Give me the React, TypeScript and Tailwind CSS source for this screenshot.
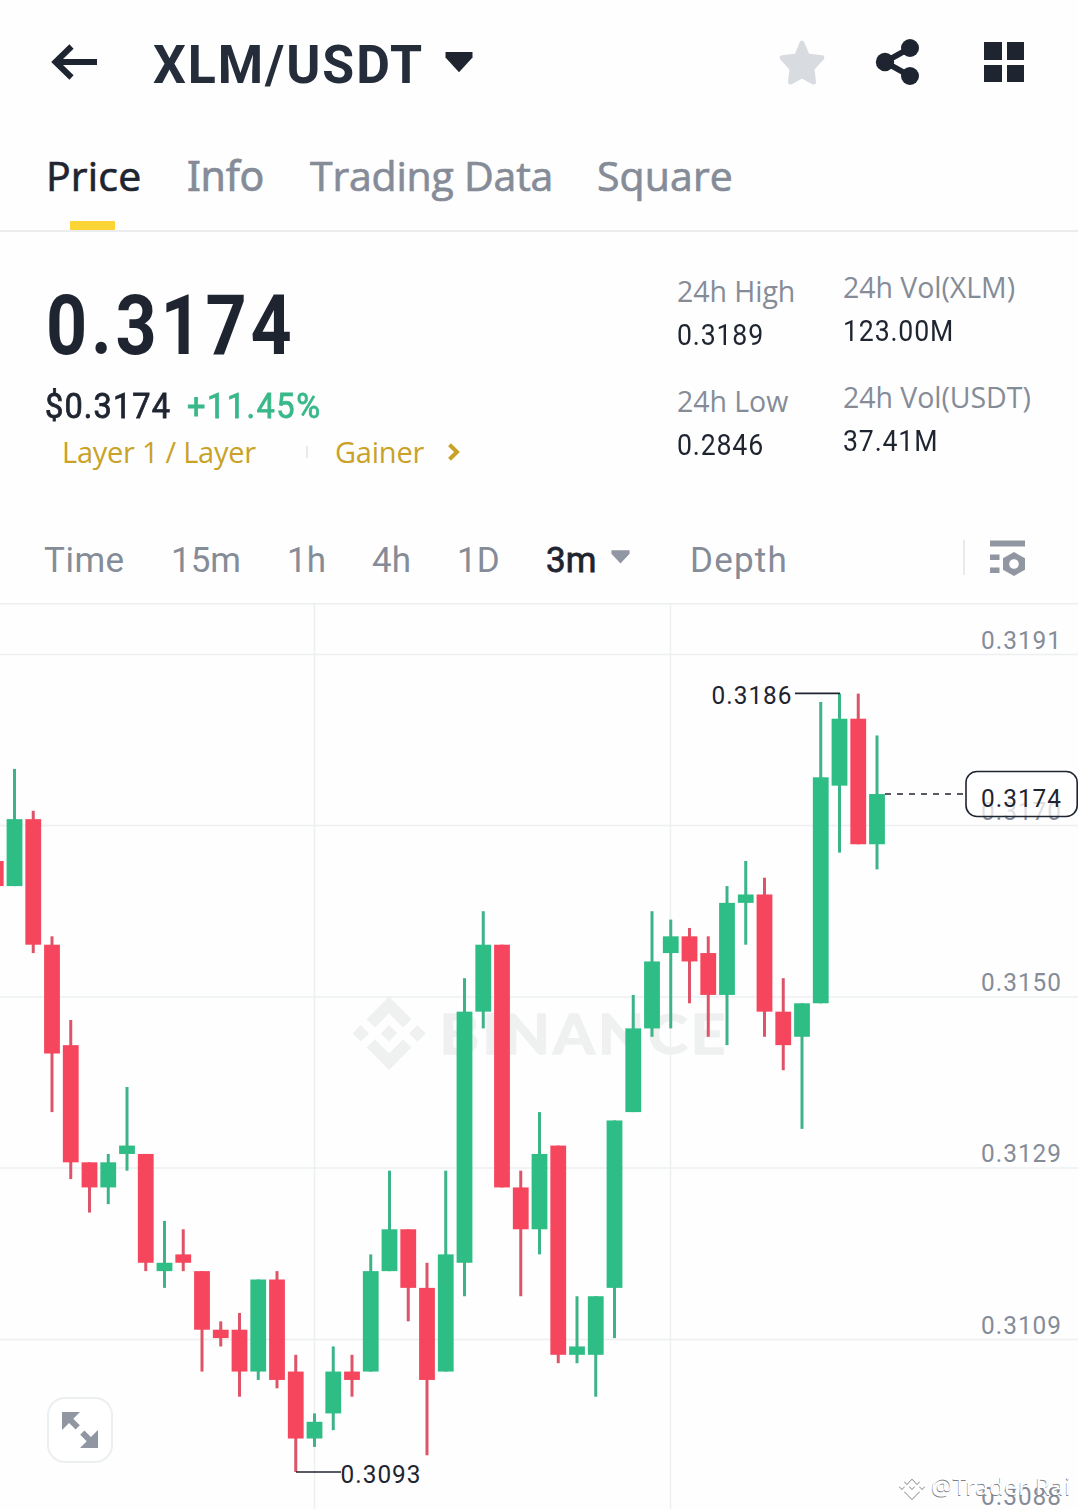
const GREEN = '#2ebd85';
const RED = '#f6465d';
const TOP_Y = 693.6;
const TICK = 8.37;
const FIRST_X = -4.25;
const PITCH = 18.75;

// [open, high, low, close] in units of 0.0001 below the visible high
const candles: [number, number, number, number][] = [
  [20, 20, 23, 23],
  [23, 9, 23, 15],
  [15, 14, 31, 30],
  [30, 29, 50, 43],
  [42, 39, 58, 56],
  [56, 56, 62, 59],
  [59, 55, 61, 56],
  [55, 47, 57, 54],
  [55, 55, 69, 68],
  [69, 63, 71, 68],
  [67, 64, 69, 68],
  [69, 69, 81, 76],
  [76, 75, 78, 77],
  [76, 74, 84, 81],
  [81, 70, 82, 70],
  [70, 69, 83, 82],
  [81, 79, 93, 89],
  [89, 86, 90, 87],
  [86, 78, 88, 81],
  [81, 79, 84, 82],
  [81, 67, 81, 69],
  [69, 57, 69, 64],
  [64, 64, 75, 71],
  [71, 68, 91, 82],
  [81, 57, 81, 67],
  [68, 34, 72, 38],
  [38, 26, 40, 30],
  [30, 30, 59, 59],
  [59, 57, 72, 64],
  [64, 50, 67, 55],
  [54, 54, 80, 79],
  [79, 72, 80, 78],
  [79, 72, 84, 72],
  [71, 51, 77, 51],
  [50, 36, 50, 40],
  [40, 26, 41, 32],
  [31, 27, 40, 29],
  [29, 28, 37, 32],
  [31, 29, 41, 36],
  [36, 23, 42, 25],
  [25, 20, 30, 24],
  [24, 22, 41, 38],
  [38, 34, 45, 42],
  [41, 37, 52, 37],
  [37, 1, 37, 10],
  [11, 0, 19, 3],
  [3, 0, 18, 18],
  [18, 5, 21, 12],
];

const gridRows = [
  { y: 654.5, label: '0.3191' },
  { y: 825.5, label: '0.3170' },
  { y: 997, label: '0.3150' },
  { y: 1168, label: '0.3129' },
  { y: 1339.5, label: '0.3109' },
  { y: 1510.5, label: '0.3088' },
];

const LOGO =
  'M16.624 13.9202l2.7175 2.7154-7.353 7.353-7.353-7.352 2.7175-2.7164 4.6355 4.6595 4.6356-4.6595zm4.6366-4.6366L24 12l-2.7154 2.7164L18.5682 12l2.6924-2.7164zm-9.272.001l2.7163 2.6914-2.7164 2.7174v-.001L9.2721 12l2.7164-2.7154zm-9.2722-.001L5.4088 12l-2.6914 2.6924L0 12l2.7164-2.7164zM11.9885.0115l7.353 7.329-2.7174 2.7154-4.6356-4.6356-4.6355 4.6595-2.7174-2.7154 7.353-7.353z';

const yOf = (tick: number) => TOP_Y + tick * TICK;

function Header() {
  return (
    <header className="flex h-[129px] items-center">
      <svg className="ml-[50px] mt-[-5px] h-[40px] w-[50px]" viewBox="50 42 50 40" fill="none" stroke="#1e2430" strokeWidth="6">
        <path d="M56 62H97" />
        <path d="M71.5 46.5 55.5 62l16 15.5" />
      </svg>
      <h1 className="ml-[53px] w-[270px] origin-left scale-x-[0.96] whitespace-nowrap text-[54px] font-bold leading-[60px] tracking-[2px] text-[#252c3a]">
        XLM/USDT
      </h1>
      <svg className="ml-[22px] mt-[-5px] h-[22px] w-[28px]" viewBox="0 0 28 22" fill="#1e2430">
        <path d="M.5 1h27v5.6L14 21.2.5 6.6z" />
      </svg>
      <div className="ml-auto mt-[-5px] flex items-center pr-[54px]">
        <svg className="h-[48px] w-[48px]" viewBox="778 38 48 48" fill="#d8dbe0" stroke="#d8dbe0" strokeWidth="5" strokeLinejoin="round">
          <path d="M802 43.2 L807.2 56 L821.8 57.7 L812 68.5 L813.5 82 L802 75.7 L790.5 82 L792 68.5 L782.2 57.7 L796.8 56 Z" />
        </svg>
        <svg className="ml-[49px] h-[48px] w-[46px]" viewBox="876 38 46 48" fill="#1e2430">
          <path d="M911 48 886 62l25 14" fill="none" stroke="#1e2430" strokeWidth="6" />
          <circle cx="911" cy="48" r="9" />
          <circle cx="886" cy="62" r="9.2" />
          <circle cx="911" cy="76" r="9" />
        </svg>
        <div className="ml-[63px] grid h-[40px] w-[40px] grid-cols-2 gap-[5px]">
          <i className="bg-[#1e2430]" />
          <i className="bg-[#1e2430]" />
          <i className="bg-[#1e2430]" />
          <i className="bg-[#1e2430]" />
        </div>
      </div>
    </header>
  );
}

function Tabs() {
  return (
    <nav className="flex h-[103px] border-b-2 border-[#ebecee] pl-[46px] pt-[18px] font-['Open_Sans',sans-serif] text-[41px] leading-[56px] text-[#858c98] [-webkit-text-stroke:0.7px]">
      <div className="relative w-[141px]">
        <span className="tracking-[0.2px] text-[#1e2430]">Price</span>
        <i className="absolute bottom-0 left-[24px] h-[9px] w-[45px] rounded-[1px] bg-[#fcd535]" />
      </div>
      <span className="w-[123px] font-['Noto_Sans',sans-serif] tracking-[-0.3px]">Info</span>
      <span className="w-[287px] tracking-[-0.2px]">Trading Data</span>
      <span className="tracking-[0.1px]">Square</span>
    </nav>
  );
}

function Stat({ label, value }: { label: string; value: string }) {
  return (
    <div className="flex flex-col gap-[2px] whitespace-nowrap leading-[42px]">
      <span className="font-['Open_Sans',sans-serif] text-[28.5px] tracking-[-0.05px] text-[#858c98]">{label}</span>
      <span className="origin-left scale-x-[0.92] text-[29px] tracking-[0.9px] text-[#1e2430]">{value}</span>
    </div>
  );
}

function Overview() {
  return (
    <section className="flex h-[280px]">
      <div className="w-[677px] pt-[49px]">
        <div className="ml-[46px] origin-left scale-x-[0.86] text-[83.5px] font-bold leading-[90px] tracking-[4.4px] text-[#1e2430]">0.3174</div>
        <div className="ml-[45px] mt-[14px] flex text-[35px] leading-[44px] [-webkit-text-stroke:0.8px]">
          <span className="w-[142px] origin-left scale-x-[0.93] tracking-[1.2px] text-[#1e2430]">$0.3174</span>
          <span className="origin-left scale-x-[0.93] tracking-[1.6px] text-[#39b889]">+11.45%</span>
        </div>
        <div className="ml-[62px] mt-[3px] flex items-center font-['Open_Sans',sans-serif] text-[29px] leading-[40px] text-[#c9a227]">
          <span className="tracking-[-0.25px]">Layer 1 / Layer</span>
          <i className="ml-[50px] h-[12px] w-[2px] bg-[#e9eaec]" />
          <span className="ml-[27px] tracking-[-0.2px]">Gainer</span>
          <svg className="ml-[24px] h-[18px] w-[12px]" viewBox="0 0 12 18" fill="none" stroke="#c9a227" strokeWidth="4">
            <path d="M1.5 1.8 9 9l-7.5 7.2" />
          </svg>
        </div>
      </div>
      <div className="flex w-[166px] flex-col gap-[24px] pt-[38px]">
        <Stat label="24h High" value="0.3189" />
        <Stat label="24h Low" value="0.2846" />
      </div>
      <div className="flex flex-col gap-[24px] pt-[34px]">
        <Stat label="24h Vol(XLM)" value="123.00M" />
        <Stat label="24h Vol(USDT)" value="37.41M" />
      </div>
    </section>
  );
}

function Toolbar() {
  return (
    <div className="flex h-[91px] items-center pl-[44px] pt-[7px] text-[35px] leading-[48px] text-[#858c98]">
      <span className="w-[127px] tracking-[0.5px]">Time</span>
      <span className="w-[116px]">15m</span>
      <span className="w-[85px]">1h</span>
      <span className="w-[85px]">4h</span>
      <span className="w-[89px]">1D</span>
      <span className="w-[65px] text-[#1e2430] [-webkit-text-stroke:0.8px]">3m</span>
      <svg className="mt-[-8px] h-[14px] w-[19px]" viewBox="0 0 19 14" fill="#9097a2">
        <path d="M.4.3h18.2v3.5L9.5 13.5.4 3.8z" />
      </svg>
      <span className="ml-[60px] tracking-[1.2px]">Depth</span>
      <i className="ml-auto mt-[-7px] h-[35px] w-[2px] bg-[#e9eaec]" />
      <svg className="ml-[24px] mr-[52px] mt-[-6px] h-[38px] w-[37px]" viewBox="989 539 37 38" fill="#9097a2">
        <path d="M990 540.5h35v6h-35zM990 554.5h9.5v5.5H990zM990 567.5h9.5v5.5H990z" />
        <path
          fillRule="evenodd"
          d="M1014 552l11 6.2v11.6l-11 6.2-11-6.2v-11.6zM1014 559.2a4.8 4.8 0 1 0 0 9.6 4.8 4.8 0 1 0 0-9.6z"
        />
      </svg>
    </div>
  );
}

// Slightly condensed, letter-spaced price used inside the chart
function ChartPrice({ x, y, children }: { x: number; y: number; children: string }) {
  return (
    <text transform={`translate(${x} ${y}) scale(0.92 1)`} textLength="87">
      {children}
    </text>
  );
}

function Chart() {
  return (
    <section className="relative h-[906px] overflow-hidden">
      <svg className="block h-[906px] w-[1078px]" viewBox="0 603 1078 906">
        <g stroke="#edf0f0" strokeWidth="1.5">
          <path d="M0 603.75H1078" />
          <path d="M314.5 603V1509M670.5 603V1509" />
          {gridRows.map((g) => (
            <path key={g.label} d={`M0 ${g.y}H1078`} />
          ))}
        </g>
        <g fill="#eff1f1">
          <path d={LOGO} transform="translate(352.5 996.8) scale(3.05)" />
          <text
            x="439.5"
            y="1053.5"
            textLength="289"
            lengthAdjust="spacingAndGlyphs"
            stroke="#eff1f1"
            strokeWidth="1.5"
            className="font-['Lato',sans-serif] text-[56px] font-bold tracking-[3px]"
          >
            BINANCE
          </text>
        </g>
        {candles.map(([open, high, low, close], i) => {
          const up = close < open;
          const x = FIRST_X + i * PITCH;
          const top = yOf(Math.min(open, close));
          const bottom = yOf(Math.max(open, close));
          return (
            <g key={i}>
              <rect x={x - 1.5} y={yOf(high)} width="3" height={yOf(low) - yOf(high)} fill={up ? '#3db488' : '#dd5469'} />
              <rect x={x - 7.9} y={top} width="15.8" height={bottom - top} fill={up ? GREEN : RED} />
            </g>
          );
        })}
        <g fill="#858c98" className="text-[26.5px]">
          {gridRows.map((g) => (
            <ChartPrice key={g.label} x={981} y={g.y - 6}>
              {g.label}
            </ChartPrice>
          ))}
        </g>
        <g stroke="#1e2430" strokeWidth="1.6" fill="none">
          <path d="M795 693.4H840" />
          <path d="M296 1472H341" />
          <path d="M885 794H965" strokeDasharray="6 6" />
          <rect x="966" y="771.5" width="111.2" height="45" rx="11" fill="#fff" fillOpacity="0.72" />
        </g>
        <g fill="#1e2430" className="text-[26.5px]">
          <ChartPrice x={711.5} y={703.7}>0.3186</ChartPrice>
          <ChartPrice x={340.5} y={1482.7}>0.3093</ChartPrice>
          <ChartPrice x={981} y={806.7}>0.3174</ChartPrice>
        </g>
      </svg>
      <button className="absolute left-[47px] top-[794px] flex h-[66px] w-[66px] items-center justify-center rounded-[18px] border-[2.5px] border-[#eceff0] bg-white">
        <svg className="h-[38px] w-[38px]" viewBox="0 0 38 38" fill="#9097a2">
          <path d="M1 1h18l-6.7 6.7 6.5 6.5-4.2 4.2-6.5-6.5L1 19z" />
          <path d="M37 37H19l6.7-6.7-6.5-6.5 4.2-4.2 6.5 6.5L37 19z" />
        </svg>
      </button>
      <div className="absolute right-[7px] top-[868px] flex items-center gap-[6px] whitespace-nowrap font-['Noto_Sans',sans-serif] text-[24px] leading-[30px] tracking-[0.4px] text-white [text-shadow:-0.5px_0.9px_0.6px_#7b8087]">
        <svg className="h-[26px] w-[26px] overflow-visible drop-shadow-[0_1px_0.5px_#7b8087]" viewBox="0 0 24 24" fill="#fff">
          <path d={LOGO} />
        </svg>
        @Trader Rai
      </div>
    </section>
  );
}

export default function App() {
  return (
    <main className="h-[1509px] w-[1078px] overflow-hidden bg-[#fefefe] font-['Roboto',sans-serif]">
      <Header />
      <Tabs />
      <Overview />
      <Toolbar />
      <Chart />
    </main>
  );
}
